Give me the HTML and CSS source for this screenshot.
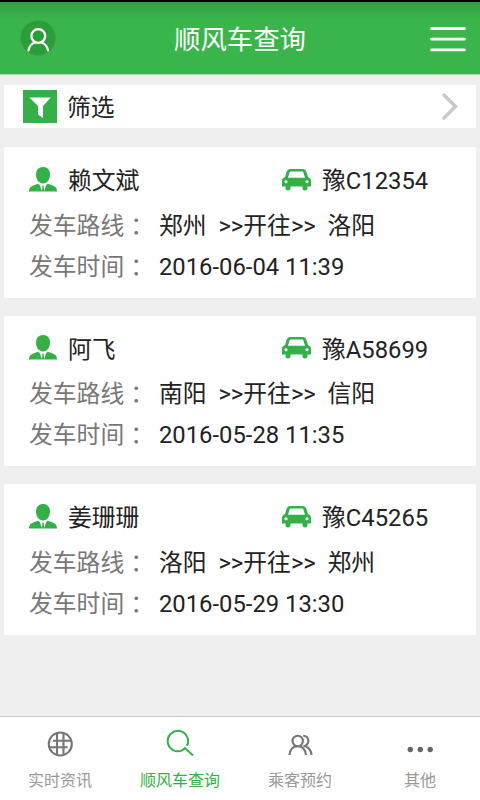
FILE: index.html
```
<!DOCTYPE html>
<html lang="zh-CN">
<head>
<meta charset="utf-8">
<title>顺风车查询</title>
<link rel="stylesheet" href="styles.css">
</head>
<body>
<svg class="symbols" aria-hidden="true">
  <symbol id="person" viewBox="0 0 28 25">
    <path d="M14 0C18.500 0 21 3 21 7.500C21 12 18.500 16.500 14 16.500C9.500 16.500 7 12 7 7.500C7 3 9.500 0 14 0Z"/>
    <path d="M0 24.500C.2 20 2 19 9.500 16.800L11 18.500 13 24.500ZM28 24.500C27.800 20 26 19 18.500 16.800L17 18.500 15 24.500ZM13 18.800H15L14.600 20.300 15.300 24.500H12.700L13.400 20.300Z"/>
  </symbol>
  <symbol id="car" viewBox="0 0 29 22">
    <path fill-rule="evenodd" d="M8 0H21Q23.500 0 24.300 2.500L26 8Q29 9 29 12V17.500H25.500V19.500Q25.500 21.500 23 21.500T20.500 19.500V17.500H8.500V19.500Q8.500 21.500 6 21.500T3.500 19.500V17.500H0V12Q0 9 3 8L4.700 2.500Q5.500 0 8 0ZM8.800 2.500Q7.900 2.500 7.600 3.400L6 8.700H23L21.400 3.400Q21.100 2.500 20.200 2.500ZM4 11.200A1.600 1.600 0 1 0 4.010 11.200ZM25 11.200A1.600 1.600 0 1 0 25.010 11.200Z"/>
  </symbol>
</svg>
<header class="header">
  <svg class="avatar" viewBox="0 0 36 36"><circle cx="18" cy="17" r="17.500" fill="#2b9e3b"/><g fill="none" stroke="#fff" stroke-width="2.300" stroke-linecap="round"><circle cx="18.300" cy="15" r="6.900"/><path d="M8.500 29.300C9.300 25 12 22.500 15 21.500M21.500 21.500C24.500 22.500 27.200 25 28 29.300"/></g></svg>
  <h1 class="title">顺风车查询</h1>
  <svg class="menu" viewBox="0 0 36 26"><path d="M1.500 2.500H34.500M1.500 13.200H34.500M1.500 23.900H34.500" stroke="#fff" stroke-width="2.800" stroke-linecap="round"/></svg>
</header>
<main class="content">
  <div class="filter">
    <svg class="filter-icon" viewBox="0 0 34 33"><path fill="#35b048" d="M0 0H34V33H0Z"/><path fill="#fff" d="M6.500 7.500H27.800L20 16V28L15 24.500V16Z"/></svg>
    <span class="filter-label">筛选</span>
    <svg class="chevron" viewBox="0 0 16 27"><path d="M2 2L13.500 13.500 2 25" fill="none" stroke="#c8c8c8" stroke-width="3.400" stroke-linecap="round"/></svg>
  </div>
  <section class="card">
    <div class="row head"><svg class="person"><use href="#person"/></svg><span class="name">赖文斌</span><svg class="car"><use href="#car"/></svg><span>豫C12354</span></div>
    <div class="row"><span class="label">发车路线<i class="colon">：</i></span><span class="value">郑州  &gt;&gt;开往&gt;&gt;  洛阳</span></div>
    <div class="row"><span class="label">发车时间<i class="colon">：</i></span><span class="value">2016-06-04 11:39</span></div>
  </section>
  <section class="card">
    <div class="row head"><svg class="person"><use href="#person"/></svg><span class="name">阿飞</span><svg class="car"><use href="#car"/></svg><span>豫A58699</span></div>
    <div class="row"><span class="label">发车路线<i class="colon">：</i></span><span class="value">南阳  &gt;&gt;开往&gt;&gt;  信阳</span></div>
    <div class="row"><span class="label">发车时间<i class="colon">：</i></span><span class="value">2016-05-28 11:35</span></div>
  </section>
  <section class="card">
    <div class="row head"><svg class="person"><use href="#person"/></svg><span class="name">姜珊珊</span><svg class="car"><use href="#car"/></svg><span>豫C45265</span></div>
    <div class="row"><span class="label">发车路线<i class="colon">：</i></span><span class="value">洛阳  &gt;&gt;开往&gt;&gt;  郑州</span></div>
    <div class="row"><span class="label">发车时间<i class="colon">：</i></span><span class="value">2016-05-29 13:30</span></div>
  </section>
</main>
<nav class="tabs">
  <a class="tab"><svg viewBox="0 0 30 30"><g fill="none" stroke="#757575" stroke-width="2.100"><circle cx="15.300" cy="15" r="11.500"/><path d="M12 4V26M18.500 4V26M8 11.800H26M4 18.200H22.500"/></g></svg><span>实时资讯</span></a>
  <a class="tab active"><svg viewBox="0 0 30 30"><path d="M21.900 16.800A10.200 10.200 0 1 0 17.200 21.300L20 19 28 26.500" fill="none" stroke="#35b048" stroke-width="2"/></svg><span>顺风车查询</span></a>
  <a class="tab"><svg viewBox="0 0 30 30"><g fill="none" stroke="#757575" stroke-width="2.100"><circle cx="12.700" cy="12" r="5.200"/><path d="M4.500 26C5 20.500 8 17.200 12.700 17.200S20.400 20.500 20.900 26M18.200 6.800C24.500 7.300 25 14.500 19.800 17C23.800 18.500 26.200 21.500 26.500 26"/></g></svg><span>乘客预约</span></a>
  <a class="tab"><svg viewBox="0 0 30 30" fill="#666"><circle cx="5.300" cy="20.500" r="2.700"/><circle cx="15.300" cy="20.500" r="2.700"/><circle cx="25.200" cy="20.500" r="2.700"/></svg><span>其他</span></a>
</nav>
</body>
</html>
```
FILE: styles.css
```
* { box-sizing: border-box; }
body {
  margin: 0;
  height: 800px;
  display: flex;
  flex-direction: column;
  overflow: hidden;
  background: #efefef;
  color: #222;
  font: 23.8px/30px Roboto, "Noto Sans CJK SC", sans-serif;
}
svg { display: block; flex: none; overflow: visible; }
.symbols { display: none; }
.header {
  height: 75px;
  padding: 2px 14px 0 20px;
  border-top: 2px solid #000;
  border-bottom: 1px solid #a9dfb0;
  background: linear-gradient(#339f42, #3ab54b 18px);
  display: flex;
  align-items: center;
  justify-content: space-between;
}
.avatar { width: 36px; height: 36px; }
.menu { width: 36px; height: 26px; }
.title { margin: 0; padding: 2px 6px 0 0; color: #fff; font-size: 26.4px; font-weight: 400; }
.content { flex: 1; padding: 10px 4px 0; }
.filter {
  height: 43px;
  margin-bottom: 19px;
  padding: 0 18px 0 19px;
  background: #fff;
  display: flex;
  align-items: center;
}
.filter-icon { width: 34px; height: 33px; margin-right: 10px; }
.filter-label { padding-top: 2px; }
.chevron { width: 16px; height: 27px; margin-left: auto; }
.card {
  height: 150.500px;
  margin-bottom: 18px;
  padding: 10.500px 24px 0 25px;
  border-radius: 2px;
  background: #fff;
  display: grid;
  grid-template-rows: 45px 45px 38px;
}
.row { display: flex; align-items: baseline; padding-top: 8px; white-space: pre; }
.row:last-child { padding-top: 4px; }
.head { align-items: center; padding-top: 0; }
.head span { padding-top: 2px; }
.person { width: 28px; height: 25px; margin: 0 11px 2px 0; fill: #35b048; }
.name { width: 214px; }
.car { width: 29px; height: 22px; margin: 0 11px 1px 0; fill: #35b048; }
.label { width: 130px; color: #777; }
.colon { margin-left: 6px; font-style: normal; }
.tabs {
  height: 84px;
  border-top: 1px solid #ccc;
  background: #fff;
  display: grid;
  grid-template-columns: repeat(4, 1fr);
}
.tab {
  padding-top: 12px;
  display: flex;
  flex-direction: column;
  align-items: center;
  gap: 10px;
  color: #999;
  font-size: 16px;
  line-height: 24px;
}
.tab svg { width: 30px; height: 30px; }
.active { color: #35b048; }
```
